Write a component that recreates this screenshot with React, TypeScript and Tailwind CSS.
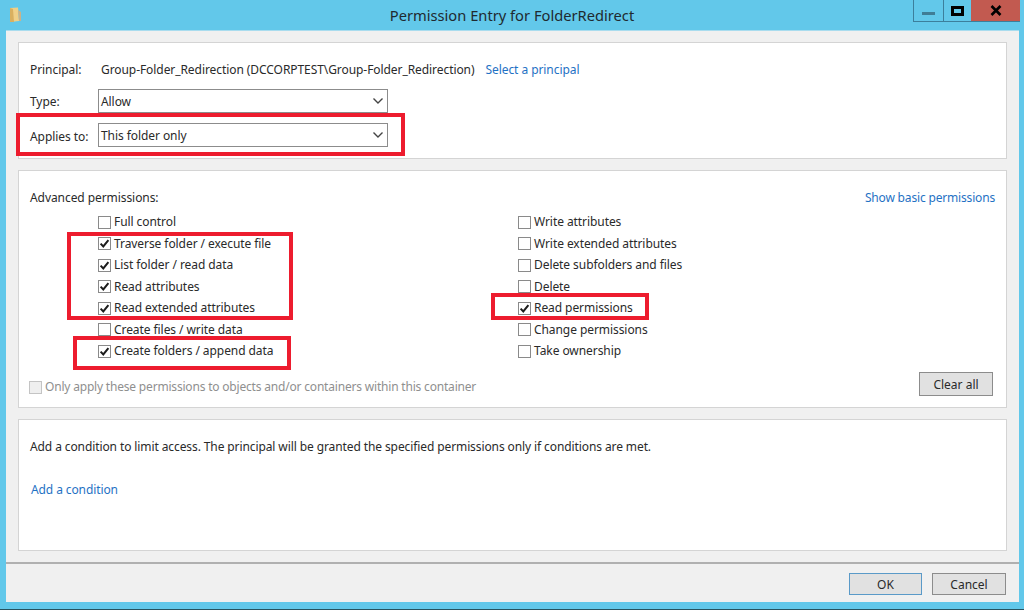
const Check = ({ checked, disabled }: { checked?: boolean; disabled?: boolean }) => (
  <span className={`w-[13px] h-[13px] shrink-0 border flex items-center justify-center ${disabled ? "border-[#c4c4c4] bg-[#efefef]" : "border-[#8a8a8a] bg-white"}`}>
    {checked && (
      <svg width="11" height="11" viewBox="0 0 11 11">
        <path d="M1.6 5.6 L4.3 8.4 L9.4 2.2" fill="none" stroke="#1c1c1c" strokeWidth="2" />
      </svg>
    )}
  </span>
);

const Row = ({ label, checked }: { label: string; checked?: boolean }) => (
  <div className="h-[21.5px] flex items-center gap-[3px] text-[12px] text-[#2a2a2a] tracking-[-0.07px]">
    <Check checked={checked} />
    <span>{label}</span>
  </div>
);

const Select = ({ value }: { value: string }) => (
  <div className="w-[290px] h-[24px] border border-[#8c8c8c] bg-white flex items-center justify-between pl-[2px] pr-[3px] text-[12px] text-[#2a2a2a] tracking-[-0.07px]">
    <span className="relative top-[0.5px]">{value}</span>
    <svg width="12" height="8" viewBox="0 0 12 8">
      <path d="M1.5 1.5 L6 6 L10.5 1.5" fill="none" stroke="#444" strokeWidth="1.4" />
    </svg>
  </div>
);

const Btn = ({ label, className }: { label: string; className: string }) => (
  <div className={`bg-[#e1e1e1] border flex items-center justify-center text-[12px] text-[#2a2a2a] ${className}`}>
    <span className="relative top-[1px]">{label}</span>
  </div>
);

const RedBox = ({ className }: { className: string }) => (
  <div className={`absolute border-[4px] border-[#ed1c2e] ${className}`} />
);

const left: [string, boolean][] = [
  ["Full control", false],
  ["Traverse folder / execute file", true],
  ["List folder / read data", true],
  ["Read attributes", true],
  ["Read extended attributes", true],
  ["Create files / write data", false],
  ["Create folders / append data", true],
];
const right: [string, boolean][] = [
  ["Write attributes", false],
  ["Write extended attributes", false],
  ["Delete subfolders and files", false],
  ["Delete", false],
  ["Read permissions", true],
  ["Change permissions", false],
  ["Take ownership", false],
];

export default function App() {
  return (
    <div className="relative w-[1024px] h-[610px] overflow-hidden bg-[#62c8ea] flex flex-col" style={{ fontFamily: '"Noto Sans", "Open Sans", sans-serif' }}>
      <div className="h-[30px] shrink-0 flex items-start justify-between relative">
        <svg className="ml-[9px] mt-[7px]" width="13" height="16" viewBox="0 0 13 16">
          <path d="M1 1 L9 0.5 L10 14 L1 15 Z" fill="#f0d088" />
          <path d="M1 1 L4 2 L5 15 L1 15 Z" fill="#d9b060" />
          <path d="M9 3 L12 5 L12 14 L10 14 Z" fill="#c9b28a" />
        </svg>
        <div className="absolute left-0 right-0 top-[6px] text-center text-[14.7px] leading-[19px] text-[#1f2a30]">Permission Entry for FolderRedirect</div>
        <div className="relative flex h-[22px] mr-[4px] border-b border-l border-[#3c7f9c]">
          <div className="w-[30px] border-r border-[#3c7f9c] flex items-center justify-center">
            <div className="w-[13px] h-[3px] bg-[#3f7d96] mt-[5px]" />
          </div>
          <div className="w-[27px] flex items-center justify-center">
            <div className="w-[13px] h-[10px] border-[3px] border-black" />
          </div>
          <div className="w-[49px] bg-[#c25a50] flex items-center justify-center">
            <svg width="12" height="11" viewBox="0 0 12 11">
              <path d="M1.5 1 L10.5 10 M10.5 1 L1.5 10" stroke="#000" strokeWidth="2.6" />
            </svg>
          </div>
        </div>
      </div>

      <div className="flex-1 min-h-0 ml-[6px] mr-[5px] mb-[8px] bg-[#f0f0f0] border-t border-[#a9dcee] flex flex-col">
        <div className="flex-1 min-h-0 px-[12px] pt-[11px] flex flex-col gap-[11px]">
          <div className="h-[117px] shrink-0 bg-white border border-[#d4d4d4] pl-[11px] pt-[18px] text-[12px] text-[#2a2a2a] tracking-[-0.07px]">
            <div className="h-[17px] flex items-center">
              <span className="w-[71px]">Principal:</span>
              <span>Group-Folder_Redirection (DCCORPTEST\Group-Folder_Redirection)</span>
              <span className="ml-[11px] text-[#1f72c4]">Select a principal</span>
            </div>
            <div className="mt-[11px] flex items-center h-[24px]">
              <span className="w-[68px] relative top-[1px]">Type:</span>
              <Select value="Allow" />
            </div>
            <div className="mt-[10px] flex items-center h-[24px]">
              <span className="w-[68px] relative top-[2px]">Applies to:</span>
              <Select value="This folder only" />
            </div>
          </div>

          <div className="h-[238px] shrink-0 bg-white border border-[#d4d4d4] pl-[11px] pr-[11px] pt-[18px] text-[12px] text-[#2a2a2a] flex flex-col">
            <div className="h-[17px] flex items-center justify-between tracking-[-0.07px]">
              <span>Advanced permissions:</span>
              <span className="text-[#1f72c4] tracking-[-0.17px]">Show basic permissions</span>
            </div>
            <div className="mt-[5.5px] pl-[68px] grid grid-cols-[420px_1fr]">
              <div>{left.map(([l, c]) => <Row key={l} label={l} checked={c} />)}</div>
              <div>{right.map(([l, c]) => <Row key={l} label={l} checked={c} />)}</div>
            </div>
            <div className="mt-[10px] flex items-start justify-between">
              <div className="flex items-center gap-[3px] text-[#8f8f8f] tracking-[-0.19px] mt-[6px] ml-[-1px]">
                <Check disabled />
                <span>Only apply these permissions to objects and/or containers within this container</span>
              </div>
              <Btn label="Clear all" className="w-[74px] h-[24px] border-[#8c8c8c] mr-[2px]" />
            </div>
          </div>

          <div className="h-[132px] shrink-0 bg-white border border-[#d4d4d4] pl-[11px] pt-[18px] text-[12px] text-[#2a2a2a] tracking-[-0.1px]">
            <div className="h-[17px] flex items-center">Add a condition to limit access. The principal will be granted the specified permissions only if conditions are met.</div>
            <div className="mt-[26px] h-[17px] pl-[1px] flex items-center text-[#1f72c4]">Add a condition</div>
          </div>
        </div>

        <div className="h-[40px] shrink-0 border-t-[2px] border-[#b0b0b0] flex items-start justify-end gap-[10px] pr-[13px] pt-[9px]">
          <Btn label="OK" className="w-[73px] h-[22px] border-[#5a9ac8]" />
          <Btn label="Cancel" className="w-[74px] h-[22px] border-[#8c8c8c]" />
        </div>
      </div>
      <div className="absolute left-0 right-0 bottom-0 h-[1px] bg-[#27535f]" />

      <RedBox className="left-[16px] top-[113px] w-[389px] h-[43px]" />
      <RedBox className="left-[67px] top-[232px] w-[226px] h-[88px]" />
      <RedBox className="left-[73px] top-[336px] w-[218px] h-[34px]" />
      <RedBox className="left-[491px] top-[293px] w-[158px] h-[27px]" />
    </div>
  );
}
